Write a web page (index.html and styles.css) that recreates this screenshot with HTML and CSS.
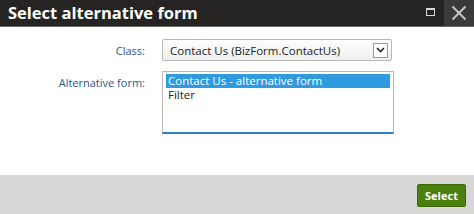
FILE: index.html
```html
<!DOCTYPE html>
<html lang="en">
<head>
    <meta charset="UTF-8">
    <title>Select alternative form</title>
    <link rel="stylesheet" href="styles.css">
</head>
<body>
    <div class="dialog">
        <header class="title-bar">
            <h1>Select alternative form</h1>
            <div class="title-actions">
                <span class="maximize"></span>
                <span class="close">
                    <svg width="16" height="16" viewBox="0 0 16 16">
                        <path d="M1.5 1.5 L14.5 14.5 M14.5 1.5 L1.5 14.5" stroke="#c4c4c4" stroke-width="2" fill="none"/>
                    </svg>
                </span>
            </div>
        </header>

        <div class="content">
            <div class="form-row">
                <label class="form-label">Class:</label>
                <div class="dropdown">
                    <span class="dropdown-text">Contact Us (BizForm.ContactUs)</span>
                    <span class="dropdown-arrow">
                        <svg width="9" height="6" viewBox="0 0 9 6">
                            <path d="M1 1 L4.5 4.5 L8 1" stroke="#222" stroke-width="1.6" fill="none"/>
                        </svg>
                    </span>
                </div>
            </div>
            <div class="form-row">
                <label class="form-label">Alternative form:</label>
                <div class="listbox">
                    <div class="list-item selected">Contact Us - alternative form</div>
                    <div class="list-item">Filter</div>
                </div>
            </div>
        </div>

        <footer class="footer">
            <button class="btn">Select</button>
        </footer>
    </div>
</body>
</html>
```

FILE: styles.css
```css
body {
    margin: 0;
    font-family: 'Open Sans', sans-serif;
    background: #fff;
}
.dialog {
    width: 474px;
    height: 214px;
    display: flex;
    flex-direction: column;
}
.title-bar {
    height: 26px;
    background-color: #252423;
    border-bottom: 1px solid #6a6a6a;
    display: flex;
    justify-content: space-between;
    align-items: stretch;
}
h1 {
    margin: 0;
    padding-left: 8px;
    color: #fff;
    font-size: 16.5px;
    font-weight: 700;
    line-height: 25px;
}
.title-actions {
    display: flex;
    align-items: stretch;
}
.maximize {
    width: 7px;
    height: 5px;
    border: 1px solid #d8d8d8;
    border-top-width: 2px;
    align-self: center;
    margin-right: 9px;
    margin-top: -2px;
}
.close {
    width: 30px;
    background-color: #3a3a3a;
    display: flex;
    justify-content: center;
    align-items: center;
}
.content {
    flex: 1;
    padding-top: 12px;
}
.form-row {
    display: flex;
    align-items: flex-start;
    margin-bottom: 10px;
}
.form-label {
    width: 145px;
    text-align: right;
    color: #1c5990;
    font-size: 11px;
    padding-top: 4px;
}
.dropdown {
    margin-left: 17px;
    width: 228px;
    height: 20px;
    border: 1px solid #b8b8b8;
    border-radius: 2px;
    background: linear-gradient(#fdfdfd, #efefef);
    display: flex;
    align-items: center;
    justify-content: space-between;
    font-size: 11.5px;
    color: #222;
}
.dropdown-text {
    padding-left: 7px;
}
.dropdown-arrow {
    width: 13px;
    height: 13px;
    border: 1px solid #9a9a9a;
    background: #fff;
    margin-right: 3px;
    display: flex;
    justify-content: center;
    align-items: center;
}
.listbox {
    margin-left: 17px;
    width: 224px;
    height: 56px;
    border: 1px solid #b8b8b8;
    border-bottom: 2px solid #2f7fc4;
    padding: 2px 3px;
    font-size: 11.5px;
    color: #222;
}
.list-item {
    height: 14px;
    line-height: 14px;
    padding-left: 2px;
}
.list-item.selected {
    background-color: #2f9ae0;
    color: #fff;
}
.footer {
    height: 39px;
    background-color: #d7d8d5;
    display: flex;
    justify-content: flex-end;
    align-items: center;
    padding-right: 8px;
}
.btn {
    width: 49px;
    height: 23px;
    background-color: #4b800f;
    border: 1px solid #3c6a0a;
    border-radius: 2px;
    color: #fff;
    font-family: 'Open Sans', sans-serif;
    font-size: 11px;
    font-weight: 700;
    padding: 0;
    margin-top: 2px;
}
```
